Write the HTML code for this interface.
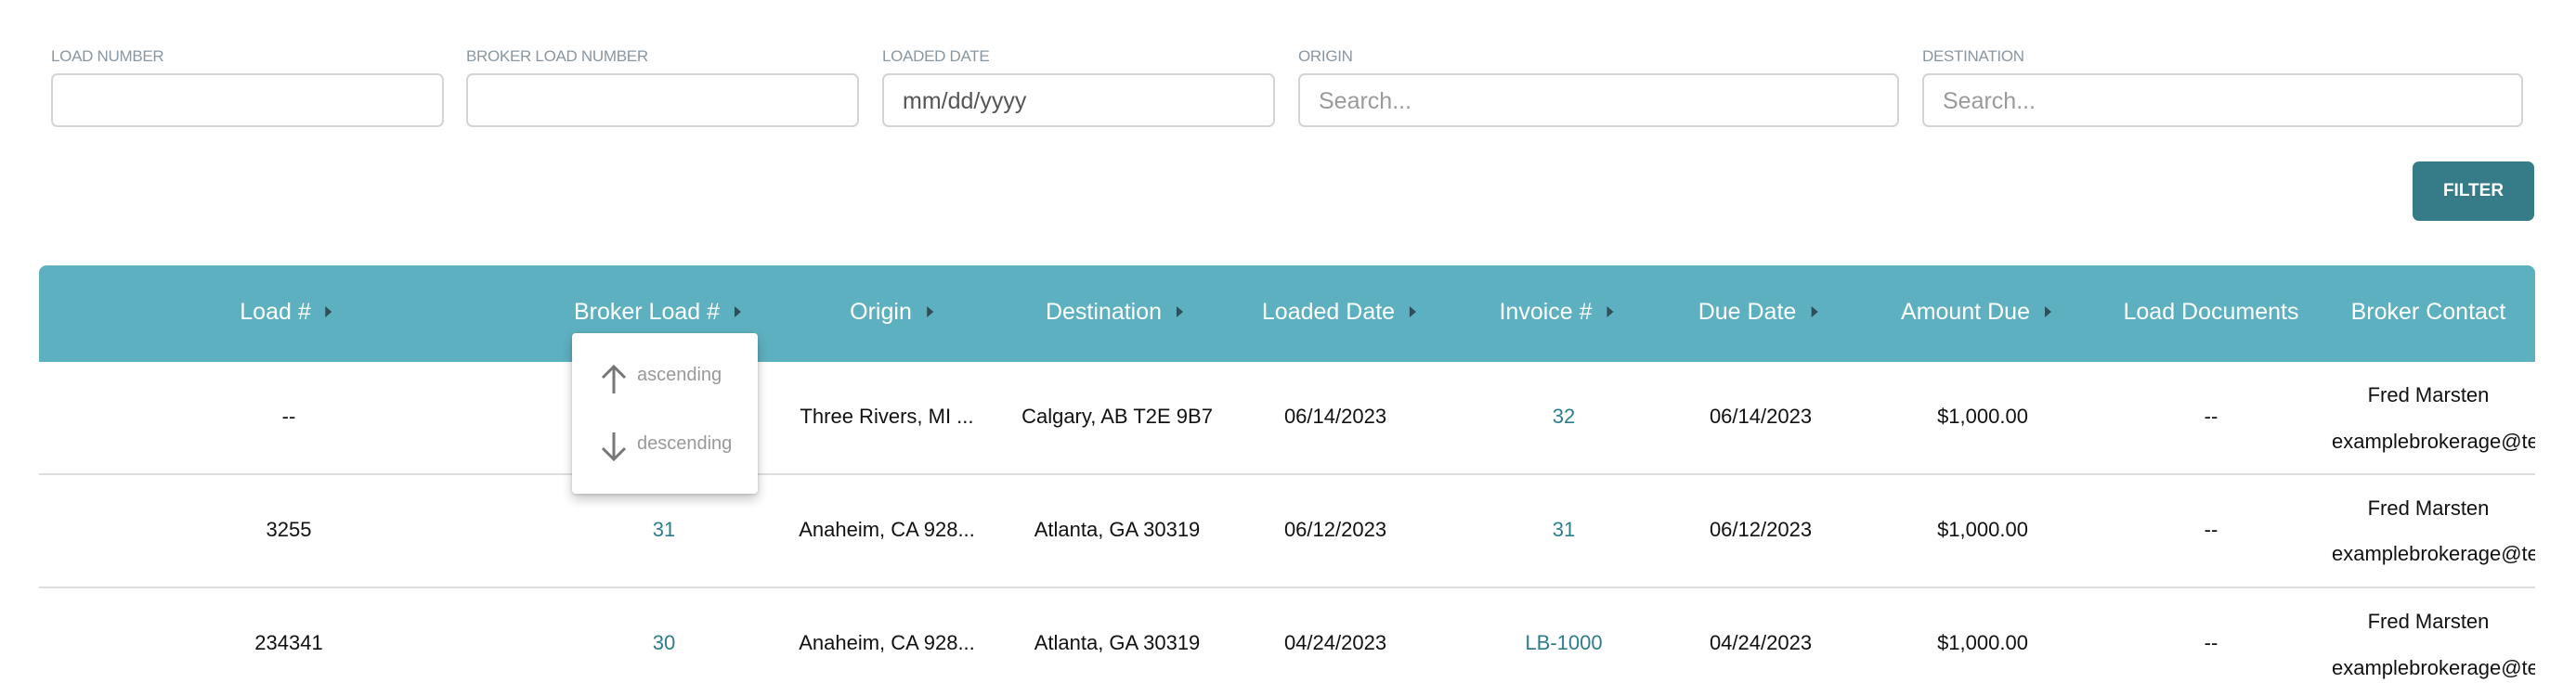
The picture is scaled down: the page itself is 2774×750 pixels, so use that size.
<!DOCTYPE html>
<html><head><meta charset="utf-8"><style>
*{margin:0;padding:0;box-sizing:border-box}
body{width:2774px;height:750px;overflow:hidden;background:#fff;font-family:"Liberation Sans",sans-serif;position:relative}
.a{position:absolute;white-space:nowrap}
.lbl{font-size:17px;color:#8a97a0;top:51px;letter-spacing:-0.3px}
.in{position:absolute;top:79px;height:58px;border:2px solid #d4d4d4;border-radius:7px;background:#fff;font-size:25px;color:#9a9a9a;padding:14px 20px}
.hd{position:absolute;left:42px;top:286px;width:2688px;height:104px;background:#5db0c0;border-radius:8px 8px 0 0}
.h{position:absolute;top:322px;color:#fff;font-size:25px;transform:translateX(-50%);white-space:nowrap}
.tri{display:inline-block;width:0;height:0;border-top:6px solid transparent;border-bottom:6px solid transparent;border-left:7px solid #2f4e57;margin-left:16px;vertical-align:2px}
.c{position:absolute;font-size:22px;color:#111;transform:translate(-50%,-50%);white-space:nowrap}
.lk{color:#2e7d8c}
.line{position:absolute;left:42px;width:2688px;height:2px;background:#dedede}
.clip{position:absolute;left:0;top:0;width:2730px;height:750px;overflow:hidden}
</style></head><body>
<div class="a lbl" style="left:55px">LOAD NUMBER</div>
<div class="a lbl" style="left:502px">BROKER LOAD NUMBER</div>
<div class="a lbl" style="left:950px">LOADED DATE</div>
<div class="a lbl" style="left:1398px">ORIGIN</div>
<div class="a lbl" style="left:2070px">DESTINATION</div>
<div class="in" style="left:55px;width:423px"></div>
<div class="in" style="left:502px;width:423px"></div>
<div class="in" style="left:950px;width:423px;color:#555">mm/dd/yyyy</div>
<div class="in" style="left:1398px;width:647px">Search...</div>
<div class="in" style="left:2070px;width:647px">Search...</div>
<div class="a" style="left:2598px;top:174px;width:131px;height:64px;background:#357b88;border-radius:7px;color:#fff;font-size:19px;font-weight:bold;text-align:center;line-height:64px">FILTER</div>

<div class="hd"></div>
<div class="h" style="left:308px">Load #<span class="tri"></span></div>
<div class="h" style="left:708px">Broker Load #<span class="tri"></span></div>
<div class="h" style="left:960px">Origin<span class="tri"></span></div>
<div class="h" style="left:1200px">Destination<span class="tri"></span></div>
<div class="h" style="left:1442px">Loaded Date<span class="tri"></span></div>
<div class="h" style="left:1676px">Invoice #<span class="tri"></span></div>
<div class="h" style="left:1893px">Due Date<span class="tri"></span></div>
<div class="h" style="left:2128px">Amount Due<span class="tri"></span></div>
<div class="h" style="left:2381px">Load Documents</div>
<div class="h" style="left:2615px">Broker Contact</div>

<div class="line" style="top:510px"></div>
<div class="line" style="top:632px"></div>

<div class="clip">
<div class="c" style="left:311px;top:449px">--</div>
<div class="c" style="left:955px;top:449px">Three Rivers, MI ...</div>
<div class="c" style="left:1203px;top:449px">Calgary, AB T2E 9B7</div>
<div class="c" style="left:1438px;top:449px">06/14/2023</div>
<div class="c lk" style="left:1684px;top:449px">32</div>
<div class="c" style="left:1896px;top:449px">06/14/2023</div>
<div class="c" style="left:2135px;top:449px">$1,000.00</div>
<div class="c" style="left:2381px;top:449px">--</div>
<div class="c" style="left:2615px;top:426px">Fred Marsten</div>
<div class="a" style="left:2511px;top:463px;font-size:22px;color:#111">examplebrokerage@test.com</div>

<div class="c" style="left:311px;top:571px">3255</div>
<div class="c lk" style="left:715px;top:571px">31</div>
<div class="c" style="left:955px;top:571px">Anaheim, CA 928...</div>
<div class="c" style="left:1203px;top:571px">Atlanta, GA 30319</div>
<div class="c" style="left:1438px;top:571px">06/12/2023</div>
<div class="c lk" style="left:1684px;top:571px">31</div>
<div class="c" style="left:1896px;top:571px">06/12/2023</div>
<div class="c" style="left:2135px;top:571px">$1,000.00</div>
<div class="c" style="left:2381px;top:571px">--</div>
<div class="c" style="left:2615px;top:548px">Fred Marsten</div>
<div class="a" style="left:2511px;top:584px;font-size:22px;color:#111">examplebrokerage@test.com</div>

<div class="c" style="left:311px;top:693px">234341</div>
<div class="c lk" style="left:715px;top:693px">30</div>
<div class="c" style="left:955px;top:693px">Anaheim, CA 928...</div>
<div class="c" style="left:1203px;top:693px">Atlanta, GA 30319</div>
<div class="c" style="left:1438px;top:693px">04/24/2023</div>
<div class="c lk" style="left:1684px;top:693px">LB-1000</div>
<div class="c" style="left:1896px;top:693px">04/24/2023</div>
<div class="c" style="left:2135px;top:693px">$1,000.00</div>
<div class="c" style="left:2381px;top:693px">--</div>
<div class="c" style="left:2615px;top:670px">Fred Marsten</div>
<div class="a" style="left:2511px;top:707px;font-size:22px;color:#111">examplebrokerage@test.com</div>
</div>

<div class="a" style="left:616px;top:359px;width:200px;height:173px;background:#fff;border-radius:4px;box-shadow:0 6px 12px rgba(0,0,0,0.22),0 1px 3px rgba(0,0,0,0.15)">
<svg style="position:absolute;left:29px;top:33px" width="32" height="34" viewBox="0 0 32 34"><path d="M16 32V3M4 15L16 3L28 15" stroke="#777" stroke-width="3" fill="none"/></svg>
<div class="a" style="left:70px;top:34px;font-size:20px;color:#999">ascending</div>
<svg style="position:absolute;left:29px;top:105px" width="32" height="34" viewBox="0 0 32 34"><path d="M16 2V31M4 19L16 31L28 19" stroke="#777" stroke-width="3" fill="none"/></svg>
<div class="a" style="left:70px;top:108px;font-size:20px;color:#999">descending</div>
</div>
</body></html>
